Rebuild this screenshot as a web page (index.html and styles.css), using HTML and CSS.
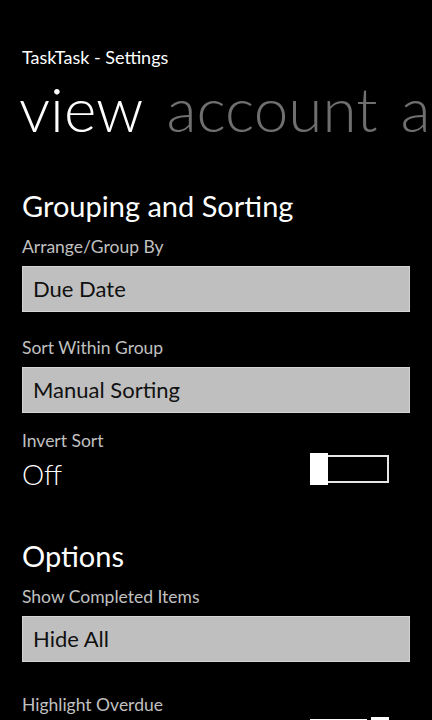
FILE: index.html
```html
<!DOCTYPE html>
<html lang="en">
<head>
    <meta charset="UTF-8">
    <meta name="viewport" content="width=device-width, initial-scale=1.0">
    <title>TaskTask - Settings</title>
    <link rel="stylesheet" href="styles.css">
</head>
<body>
    <!-- header -->
    <header class="page-header">
        <div class="app-title">TaskTask - Settings</div>
        <div class="pivot">
            <span class="pivot-item active">view</span>
            <span class="pivot-item">account</span>
            <span class="pivot-item">about</span>
        </div>
    </header>

    <!-- view settings -->
    <div class="settings">
        <h2 class="group-title">Grouping and Sorting</h2>

        <div class="field">
            <div class="field-label">Arrange/Group By</div>
            <div class="picker">Due Date</div>
        </div>

        <div class="field">
            <div class="field-label">Sort Within Group</div>
            <div class="picker">Manual Sorting</div>
        </div>

        <div class="field toggle-field">
            <div class="field-label">Invert Sort</div>
            <div class="toggle-row">
                <span class="toggle-state">Off</span>
                <span class="toggle">
                    <span class="toggle-track"></span>
                    <span class="toggle-thumb"></span>
                </span>
            </div>
        </div>

        <h2 class="group-title next">Options</h2>

        <div class="field">
            <div class="field-label">Show Completed Items</div>
            <div class="picker">Hide All</div>
        </div>

        <div class="field toggle-field last">
            <div class="field-label">Highlight Overdue</div>
            <div class="toggle-row">
                <span class="toggle-state">On</span>
                <span class="toggle on">
                    <span class="toggle-track"></span>
                    <span class="toggle-thumb"></span>
                </span>
            </div>
        </div>
    </div>
</body>
</html>
```

FILE: styles.css
```css
/* page */
body {
    margin: 0;
    background-color: #000;
    color: #fff;
    font-family: Lato, "Open Sans", sans-serif;
    overflow: hidden;
}

/* header */
.page-header {
    padding-top: 45px;
}

.app-title {
    padding-left: 22px;
    font-size: 18px;
    line-height: 24px;
}

.pivot {
    display: flex;
    gap: 23px;
    padding-left: 19px;
    white-space: nowrap;
    font-size: 62px;
    font-weight: 300;
    line-height: 78px;
}

.pivot-item {
    color: #6f6f6f;
}

.pivot-item.active {
    color: #fff;
}

/* settings list */
.settings {
    padding: 0 22px;
}

.group-title {
    margin: 39px 0 0;
    font-size: 29px;
    font-weight: 400;
    line-height: 40px;
}

.group-title.next {
    margin-top: 44px;
}

.field {
    margin-top: 25px;
}

.group-title + .field {
    margin-top: 10px;
}

.field-label {
    color: #c0c0c0;
    font-size: 17.5px;
    line-height: 22px;
}

.picker {
    margin-top: 8px;
    height: 44px;
    padding: 0 10px;
    background-color: #bfbfbf;
    border: 1px solid #d4d4d4;
    color: #111;
    font-size: 22px;
    line-height: 44px;
}

.toggle-field {
    margin-top: 17px;
}

.toggle-field.last {
    margin-top: 32px;
}

.toggle-row {
    display: flex;
    justify-content: space-between;
    align-items: flex-start;
    padding-right: 21px;
}

.toggle-state {
    margin-top: 4px;
    font-size: 28px;
    font-weight: 300;
    line-height: 36px;
}

/* toggle switch */
.toggle {
    position: relative;
    margin-top: 1px;
    width: 79px;
    height: 32px;
}

.toggle-track {
    position: absolute;
    left: 16px;
    right: 0;
    top: 2px;
    bottom: 2px;
    border: 2px solid #e6e6e6;
    border-left: none;
}

.toggle-thumb {
    position: absolute;
    left: 0;
    top: 0;
    width: 18px;
    height: 32px;
    background-color: #fff;
}

.toggle.on .toggle-track {
    left: 0;
    right: 22px;
    border: none;
    background-color: #fff;
}

.toggle.on .toggle-thumb {
    left: auto;
    right: 0;
}
```
